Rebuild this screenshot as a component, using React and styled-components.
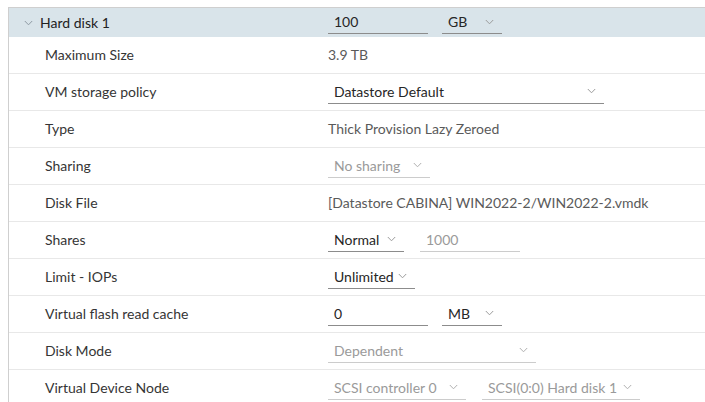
import React from "react";
import styled, { createGlobalStyle } from "styled-components";

const GlobalStyle = createGlobalStyle`
    body {
        margin: 0;
        background: #fff;
        font-family: "Lato", "Open Sans", sans-serif;
    }
`;

const Page = styled.div`
    padding: 7px 0 0 8px;
    height: 395px;
    overflow: hidden;
`;

const Panel = styled.div`
    border-left: 1px solid #cfcfcf;
    border-top: 1px solid #cfcfcf;
    height: 100%;
`;

const HeaderRow = styled.div`
    display: grid;
    grid-template-columns: 319px 1fr;
    align-items: center;
    height: 29px;
    background: #d9e4ea;
`;

const HeaderTitle = styled.div`
    display: flex;
    align-items: center;
    gap: 7px;
    padding-left: 15px;
    font-size: 14px;
    color: #222;
`;

const Row = styled.div`
    display: grid;
    grid-template-columns: 319px 1fr;
    align-items: center;
    height: 36px;
    border-bottom: 1px solid #e8e8e8;
`;

const Label = styled.div`
    padding-left: 36px;
    padding-bottom: 1px;
    font-size: 14px;
    color: #353535;
`;

const Value = styled.div`
    display: flex;
    align-items: center;
    gap: ${(p) => p.gap || 16}px;
    padding-bottom: 1px;
    font-size: 14px;
    color: #5a5a5a;
`;

const Control = styled.div`
    display: flex;
    align-items: center;
    justify-content: space-between;
    box-sizing: border-box;
    width: ${(p) => p.w}px;
    height: 24px;
    padding: 0 8px 0 6px;
    border-bottom: 1px solid ${(p) => (p.disabled ? "#cccccc" : "#8c8c8c")};
    font-size: 14px;
    color: ${(p) => (p.disabled ? "#9a9a9a" : "#262626")};
`;

const Chevron = ({ color = "#a8a8a8" }) => (
    <svg width="9" height="6" viewBox="0 0 9 6">
        <path d="M0.8 1 L4.5 4.8 L8.2 1" fill="none" stroke={color} strokeWidth="1" />
    </svg>
);

function Select({ w, disabled, children }) {
    return (
        <Control w={w} disabled={disabled}>
            <span>{children}</span>
            <Chevron color={disabled ? "#b0b0b0" : "#9c9c9c"} />
        </Control>
    );
}

function Input({ w, disabled, children }) {
    return (
        <Control w={w} disabled={disabled}>
            <span>{children}</span>
        </Control>
    );
}

const rows = [
    { label: "Maximum Size", value: <span>3.9 TB</span> },
    { label: "VM storage policy", value: <Select w={276}>Datastore Default</Select> },
    { label: "Type", value: <span>Thick Provision Lazy Zeroed</span> },
    { label: "Sharing", value: <Select w={102} disabled>No sharing</Select> },
    { label: "Disk File", value: <span>[Datastore CABINA] WIN2022-2/WIN2022-2.vmdk</span> },
    {
        label: "Shares",
        value: (
            <>
                <Select w={76}>Normal</Select>
                <Input w={100} disabled>1000</Input>
            </>
        ),
    },
    { label: "Limit - IOPs", value: <Select w={87}>Unlimited</Select> },
    {
        label: "Virtual flash read cache",
        gap: 14,
        value: (
            <>
                <Input w={100}>0</Input>
                <Select w={60}>MB</Select>
            </>
        ),
    },
    { label: "Disk Mode", value: <Select w={208} disabled>Dependent</Select> },
    {
        label: "Virtual Device Node",
        value: (
            <>
                <Select w={138} disabled>SCSI controller 0</Select>
                <Select w={158} disabled>SCSI(0:0) Hard disk 1</Select>
            </>
        ),
    },
];

export default function App() {
    return (
        <Page>
            <GlobalStyle />
            <Panel>
                <HeaderRow>
                    <HeaderTitle>
                        <Chevron color="#8f9aa3" />
                        <span>Hard disk 1</span>
                    </HeaderTitle>
                    <Value gap={14}>
                        <Input w={100}>100</Input>
                        <Select w={60}>GB</Select>
                    </Value>
                </HeaderRow>
                {rows.map((r) => (
                    <Row key={r.label}>
                        <Label>{r.label}</Label>
                        <Value gap={r.gap}>{r.value}</Value>
                    </Row>
                ))}
            </Panel>
        </Page>
    );
}
